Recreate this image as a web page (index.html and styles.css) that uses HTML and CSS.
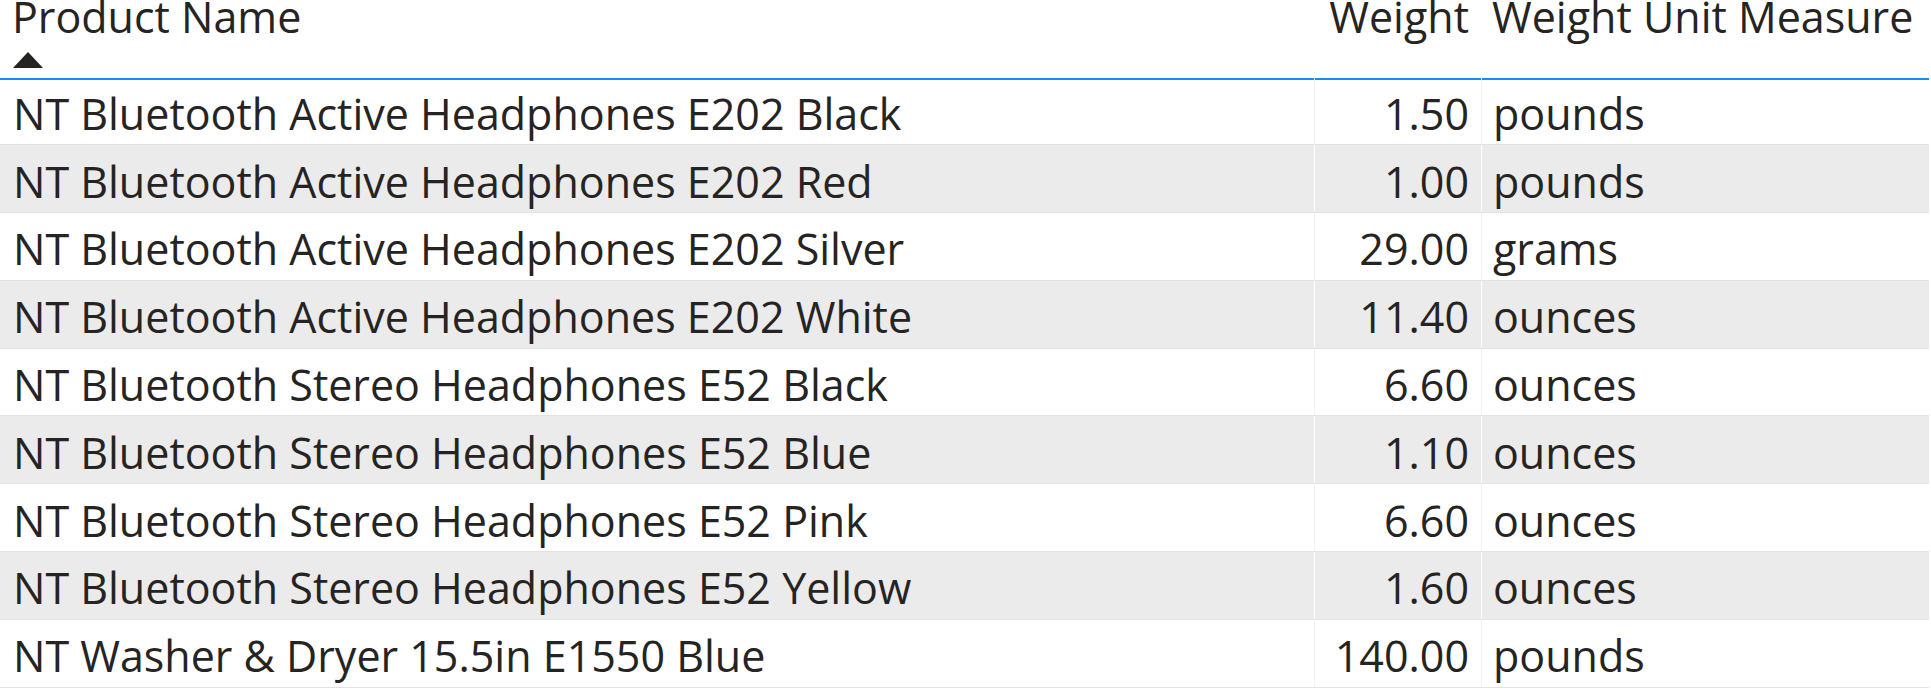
FILE: index.html
```html
<!DOCTYPE html>
<html>
<head>
<meta charset="utf-8">
<link rel="stylesheet" href="styles.css">
</head>
<body>
<div class="table">
  <div class="head">
    <div class="hcell name">
      <span class="htext">Product Name</span>
      <span class="sort"></span>
    </div>
    <div class="hcell num"><span class="htext">Weight</span></div>
    <div class="hcell unit"><span class="htext">Weight Unit Measure</span></div>
  </div>
  <div class="row"><div class="cell name">NT Bluetooth Active Headphones E202 Black</div><div class="cell num">1.50</div><div class="cell unit">pounds</div></div>
  <div class="row alt"><div class="cell name">NT Bluetooth Active Headphones E202 Red</div><div class="cell num">1.00</div><div class="cell unit">pounds</div></div>
  <div class="row"><div class="cell name">NT Bluetooth Active Headphones E202 Silver</div><div class="cell num">29.00</div><div class="cell unit">grams</div></div>
  <div class="row alt"><div class="cell name">NT Bluetooth Active Headphones E202 White</div><div class="cell num">11.40</div><div class="cell unit">ounces</div></div>
  <div class="row"><div class="cell name">NT Bluetooth Stereo Headphones E52 Black</div><div class="cell num">6.60</div><div class="cell unit">ounces</div></div>
  <div class="row alt"><div class="cell name">NT Bluetooth Stereo Headphones E52 Blue</div><div class="cell num">1.10</div><div class="cell unit">ounces</div></div>
  <div class="row"><div class="cell name">NT Bluetooth Stereo Headphones E52 Pink</div><div class="cell num">6.60</div><div class="cell unit">ounces</div></div>
  <div class="row alt"><div class="cell name">NT Bluetooth Stereo Headphones E52 Yellow</div><div class="cell num">1.60</div><div class="cell unit">ounces</div></div>
  <div class="row"><div class="cell name">NT Washer &amp; Dryer 15.5in E1550 Blue</div><div class="cell num">140.00</div><div class="cell unit">pounds</div></div>
</div>
</body>
</html>
```
FILE: styles.css
```css
html, body {
  margin: 0;
  padding: 0;
  background: #ffffff;
}
body {
  font-family: "Open Sans", "Liberation Sans", sans-serif;
  color: #252423;
  overflow: hidden;
}
.table {
  width: 1929px;
}
.head {
  display: grid;
  grid-template-columns: 1314px 167px 448px;
  height: 80px;
  box-sizing: border-box;
  border-bottom: 2.5px solid #118dff;
  margin-bottom: -2.5px;
}
.hcell {
  display: flex;
  flex-direction: column;
  font-size: 43px;
  line-height: 34px;
  white-space: nowrap;
}
.hcell.name {
  padding-left: 12px;
  align-items: flex-start;
}
.hcell.num {
  padding-right: 12px;
  align-items: flex-end;
}
.hcell.unit {
  padding-left: 11px;
}
.sort {
  margin-top: 18px;
  margin-left: 1px;
  width: 0;
  height: 0;
  border-left: 15.5px solid transparent;
  border-right: 15.5px solid transparent;
  border-bottom: 16px solid #252423;
}
.row {
  display: grid;
  grid-template-columns: 1314px 167px 448px;
  height: 67.8px;
  box-sizing: border-box;
  border-bottom: 1px solid #e3e3e3;
}
.row.alt {
  background: #ebebeb;
}
.cell {
  display: flex;
  align-items: center;
  padding-top: 6px;
  box-sizing: border-box;
  font-size: 43px;
  line-height: 56px;
  white-space: nowrap;
}
.cell + .cell {
  border-left: 1px solid #f2f2f2;
}
.row.alt .cell + .cell {
  border-left-color: #ffffff;
}
.cell.name {
  padding-left: 13px;
}
.cell.num {
  justify-content: flex-end;
  padding-right: 12px;
}
.cell.unit {
  padding-left: 11px;
}
```
